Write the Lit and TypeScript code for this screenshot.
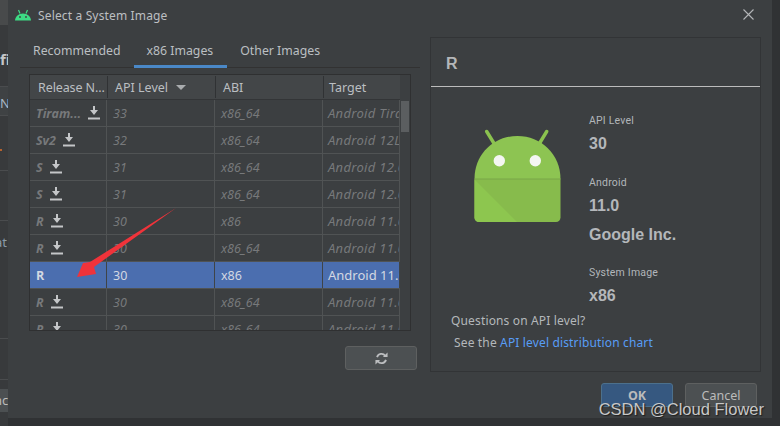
import { LitElement, html, css, svg } from 'lit';
import { customElement } from 'lit/decorators.js';

type Row = { release: string; api: string; abi: string; target: string; download: boolean; selected?: boolean };

const rows: Row[] = [
  { release: 'Tiram...', api: '33', abi: 'x86_64', target: 'Android Tiramisu', download: true },
  { release: 'Sv2', api: '32', abi: 'x86_64', target: 'Android 12L', download: true },
  { release: 'S', api: '31', abi: 'x86_64', target: 'Android 12.0', download: true },
  { release: 'S', api: '31', abi: 'x86_64', target: 'Android 12.0', download: true },
  { release: 'R', api: '30', abi: 'x86', target: 'Android 11.0', download: true },
  { release: 'R', api: '30', abi: 'x86_64', target: 'Android 11.0', download: true },
  { release: 'R', api: '30', abi: 'x86', target: 'Android 11.0', download: false, selected: true },
  { release: 'R', api: '30', abi: 'x86_64', target: 'Android 11.0', download: true },
  { release: 'R', api: '30', abi: 'x86_64', target: 'Android 11.0', download: true },
];

const downloadIcon = html`<svg class="dl" width="12" height="14" viewBox="0 0 12 14">
  <path d="M5 0h2v4h3L6 9 2 4h3z" fill="#c4c6c8"></path>
  <rect x="0" y="11.5" width="12" height="2" fill="#c4c6c8"></rect>
</svg>`;

const androidBig = svg`<svg width="90" height="96" viewBox="472 127 90 96">
  <path d="M486.7 130.5 495 144M546.7 130.5 538.5 144" stroke="#8bc34f" stroke-width="3.4" stroke-linecap="round" fill="none"></path>
  <path d="M474.5 178C474.5 153 494 135 517.5 135S560.5 153 560.5 178z" fill="#8dc452"></path>
  <path d="M474.5 178h86v38.500a4.500 4.500 0 0 1-4.500 4.500H479a4.500 4.500 0 0 1-4.500-4.500z" fill="#87bb4c"></path>
  <path d="M474.500 178.500 517 221H479a4.500 4.500 0 0 1-4.500-4.500z" fill="#8dc64f"></path>
  <rect x="474.500" y="177.500" width="86" height="1" fill="#7ba648"></rect>
  <circle cx="499.300" cy="159.700" r="5.700" fill="#f4f6f2"></circle>
  <circle cx="535.300" cy="159.700" r="5.700" fill="#f4f6f2"></circle>
</svg>`;

@customElement('app-root')
export class AppRoot extends LitElement {
  static styles = css`
    :host {
      display: flex;
      width: 780px;
      height: 426px;
      overflow: hidden;
      position: relative;
      background: #303234;
      font-family: 'Noto Sans', 'Open Sans', sans-serif;
      font-size: 13px;
      color: #bbbbbb;
    }
    .backdrop {
      width: 8px;
      height: 426px;
      flex: none;
      overflow: hidden;
      background: #383a3c;
      display: flex;
      flex-direction: column;
      font-size: 13px;
      white-space: nowrap;
    }
    .backdrop.right { background: #303234; }
    .bd-top { height: 25px; background: #484a4b; flex: none; }
    .bd-fi { height: 62px; flex: none; padding-top: 22px; box-sizing: border-box; font-weight: 700; font-size: 15px; line-height: 24px; color: #c4c6c8; border-bottom: 1px solid #4a4c4e; }
    .bd-n { height: 29px; flex: none; padding-top: 6px; box-sizing: border-box; line-height: 20px; color: #a9b7c6; border-bottom: 1px solid #4a4c4e; background: #3f4244; }
    .bd-dot { height: 55px; flex: none; border-bottom: 1px solid #4a4c4e; padding-top: 33px; box-sizing: border-box; }
    .bd-dot i { display: block; width: 2px; height: 2px; background: #b5622f; }
    .bd-blank { height: 50px; flex: none; border-bottom: 1px solid #4a4c4e; box-sizing: border-box; }
    .bd-at { height: 118px; flex: none; border-bottom: 1px solid #4a4c4e; padding-top: 11px; box-sizing: border-box; line-height: 20px; color: #8a9aa8; text-indent: -5px; }
    .bd-gap { height: 41px; flex: none; border-bottom: 1px solid #4a4c4e; box-sizing: border-box; }
    .bd-nc { height: 23px; margin-top: 9px; flex: none; background: #4c5052; line-height: 23px; text-indent: -6px; color: #bbbbbb; }
    .dialog {
      width: 764px;
      height: 418px;
      flex: none;
      background: #3c3f41;
      display: flex;
      flex-direction: column;
    }
    .titlebar {
      height: 30px;
      flex: none;
      display: flex;
      align-items: center;
      padding: 0 18px 0 7px;
      box-sizing: border-box;
      font-size: 12px;
      letter-spacing: 0.15px;
      color: #bdbfc1;
    }
    .titlebar svg.logo { margin-right: 7px; }
    .titlebar .close { margin-left: auto; margin-bottom: 2px; }
    .main { display: flex; flex: none; height: 342px; padding: 7px 0 0 12px; box-sizing: border-box; }
    .left { width: 400px; flex: none; display: flex; flex-direction: column; }
    .tabs {
      display: flex;
      height: 31px;
      flex: none;
      box-sizing: border-box;
      border-bottom: 1px solid #323232;
    }
    .tab {
      height: 31px;
      box-sizing: border-box;
      padding: 4px 13px 0;
      line-height: 20px;
      color: #bbbfc2;
      font-size: 12.300px;
      white-space: nowrap;
    }
    .tab.active { border-bottom: 3px solid #4a88c7; padding-right: 14px; }
    .table {
      margin: 6px 0 0 9px;
      width: 382px;
      height: 257px;
      flex: none;
      box-sizing: border-box;
      border: 1px solid #2f3031;
      display: flex;
      overflow: hidden;
    }
    .grid { width: 370px; flex: none; }
    .head, .row {
      display: grid;
      white-space: nowrap;
    }
    .head {
      grid-template-columns: 78px 108px 108px 76px;
      height: 24px;
      background: #434648;
      border-bottom: 1px solid #333537;
      box-sizing: content-box;
      font-size: 12.500px;
    }
    .th {
      display: flex;
      align-items: center;
      gap: 7px;
      padding: 1px 0 0 7px;
      overflow: hidden;
      box-sizing: border-box;
      border-right: 1px solid #303234;
      margin: 1px 0;
      color: #bbbfc2;
    }
    .th:first-child { padding-left: 8px; letter-spacing: -0.1px; }
    .th:last-child { border-right: none; padding-left: 5px; }
    .sort { width: 0; height: 0; border: 5px solid transparent; border-top: 5px solid #a9acae; border-bottom: none; margin-left: 1px; }
    .row {
      grid-template-columns: 77px 108px 108px 77px;
      height: 27px;
      box-sizing: border-box;
      border-bottom: 1px solid #505354;
    }
    .td {
      display: flex;
      align-items: center;
      overflow: hidden;
      padding-left: 6px;
      box-sizing: border-box;
      border-right: 1px solid #505354;
      font-style: italic;
      font-size: 12.500px;
      color: #77797b;
    }
    .td:last-child { font-size: 13px; letter-spacing: 0.3px; padding-left: 5px; }
    .td.rel { font-weight: 700; padding-left: 6px; gap: 7px; font-family: 'Open Sans', sans-serif; font-size: 12.500px; }
    .td .dl { flex: none; }
    .row.selected { background: #4b6eaf; }
    .row.selected .td { color: #d3d8e2; font-style: normal; border-right-color: #3f4448; }
    .row.selected .td:last-child { letter-spacing: 0; }
    .scroll { flex: 1; display: flex; flex-direction: column; padding-top: 25px; }
    .track { flex: 1; padding: 1px 1px 0 1px; }
    .thumb { width: 8px; height: 31px; background: #5b5e60; }
    .refresh-row { display: flex; justify-content: flex-end; padding: 15px 3px 0 0; }
    .btn {
      width: 72px;
      height: 24px;
      box-sizing: border-box;
      border: 1px solid #5e6060;
      border-radius: 3px;
      background: #4c5052;
      display: flex;
      align-items: center;
      justify-content: center;
      color: #bbbbbb;
      font-size: 12.500px;
    }
    .panel {
      width: 331px;
      height: 335px;
      flex: none;
      margin-left: 10px;
      box-sizing: border-box;
      border: 1px solid #323436;
      display: flex;
      flex-direction: column;
    }
    .panel-head {
      height: 49px;
      flex: none;
      box-sizing: border-box;
      border-bottom: 1px solid #bcbcbc;
      display: flex;
      align-items: center;
      padding: 4px 0 0 15px;
      font: 700 16px 'Liberation Sans', sans-serif;
      color: #b4b6b8;
    }
    .info { display: flex; height: 220px; flex: none; }
    .bot { width: 158px; flex: none; padding: 41px 0 0 41px; box-sizing: border-box; }
    .facts { display: flex; flex-direction: column; padding-top: 27px; }
    .label { font: 400 10.500px/14px Roboto, sans-serif; color: #b2b6ba; letter-spacing: 0.2px; }
    .value { font: 700 16px/18px 'Liberation Sans', sans-serif; color: #b4b7ba; margin-top: 7px; }
    .value.gap { margin-bottom: 23px; }
    .vendor { margin: 11px 0 22px; }
    .help { padding: 3px 0 0 20px; font-size: 12px; line-height: 22px; color: #b4b8bb; letter-spacing: 0.15px; }
    .help div:last-child { padding-left: 3px; }
    .help a { color: #589df6; text-decoration: none; }
    .footer { display: flex; justify-content: flex-end; gap: 12px; padding: 11px 15px 0 0; }
    .btn.primary { background: #365880; border-color: #4c708c; font-weight: 700; color: #bbbbbb; }
    .arrow { position: absolute; left: 0; top: 0; pointer-events: none; }
    .watermark {
      position: absolute;
      right: 16px;
      bottom: 7px;
      font: 400 16.500px/20px 'Liberation Sans', sans-serif;
      color: #c8c8c8;
      text-shadow: 1px 1px 1px #1e1e1e;
      white-space: nowrap;
    }
  `;

  private renderRow(r: Row) {
    return html`<div class="row ${r.selected ? 'selected' : ''}">
      <div class="td rel"><span>${r.release}</span>${r.download ? downloadIcon : ''}</div>
      <div class="td">${r.api}</div>
      <div class="td">${r.abi}</div>
      <div class="td">${r.target}</div>
    </div>`;
  }

  render() {
    return html`
      <div class="backdrop">
        <div class="bd-top"></div>
        <div class="bd-fi">fi</div>
        <div class="bd-n">N</div>
        <div class="bd-dot"><i></i></div>
        <div class="bd-blank"></div>
        <div class="bd-at">at</div>
        <div class="bd-gap"></div>
        <div class="bd-nc">nc</div>
      </div>
      <div class="dialog">
        <div class="titlebar">
          <svg class="logo" width="16" height="12" viewBox="0 0 16 12">
            <path d="M0 11.500C.3 7.500 3.500 4.500 8 4.500s7.700 3 8 7z" fill="#3ddc84"></path>
            <path d="M3.500 1 5 4.500M12.500 1 11 4.500" stroke="#3ddc84" stroke-width="1.200" fill="none"></path>
            <circle cx="5" cy="8" r=".9" fill="#3c3f41"></circle>
            <circle cx="11" cy="8" r=".9" fill="#3c3f41"></circle>
          </svg>
          <span>Select a System Image</span>
          <svg class="close" width="11" height="11" viewBox="0 0 11 11">
            <path d="M.5.5l10 10M10.500.5l-10 10" stroke="#b4b6b8" stroke-width="1.100" fill="none"></path>
          </svg>
        </div>
        <div class="main">
          <div class="left">
            <div class="tabs">
              <div class="tab">Recommended</div>
              <div class="tab active">x86 Images</div>
              <div class="tab">Other Images</div>
            </div>
            <div class="table">
              <div class="grid">
                <div class="head">
                  <div class="th">Release N...</div>
                  <div class="th">API Level <span class="sort"></span></div>
                  <div class="th">ABI</div>
                  <div class="th">Target</div>
                </div>
                ${rows.map((r) => this.renderRow(r))}
              </div>
              <div class="scroll"><div class="track"><div class="thumb"></div></div></div>
            </div>
            <div class="refresh-row">
              <div class="btn">
                <svg width="13" height="13" viewBox="0 0 14 14" fill="none">
                  <path d="M2.200 5.500A5 5 0 0 1 11 4" stroke="#bcbec0" stroke-width="2"></path>
                  <path d="M8.500 5.500h5V.5z" fill="#bcbec0"></path>
                  <path d="M11.800 8.500A5 5 0 0 1 3 10" stroke="#bcbec0" stroke-width="2"></path>
                  <path d="M5.500 8.500h-5v5z" fill="#bcbec0"></path>
                </svg>
              </div>
            </div>
          </div>
          <div class="panel">
            <div class="panel-head">R</div>
            <div class="info">
              <div class="bot">${androidBig}</div>
              <div class="facts">
                <div class="label">API Level</div>
                <div class="value gap">30</div>
                <div class="label">Android</div>
                <div class="value">11.0</div>
                <div class="value vendor">Google Inc.</div>
                <div class="label">System Image</div>
                <div class="value">x86</div>
              </div>
            </div>
            <div class="help">
              <div>Questions on API level?</div>
              <div>See the <a>API level distribution chart</a></div>
            </div>
          </div>
        </div>
        <div class="footer">
          <div class="btn primary">OK</div>
          <div class="btn">Cancel</div>
        </div>
      </div>
      <div class="backdrop right"></div>
      <svg class="arrow" width="780" height="426" viewBox="0 0 780 426">
        <path d="M176 208 94 267 96 274 77 277 83 263 90 262z" fill="#f0333a"></path>
      </svg>
      <div class="watermark">CSDN @Cloud Flower</div>
    `;
  }
}
